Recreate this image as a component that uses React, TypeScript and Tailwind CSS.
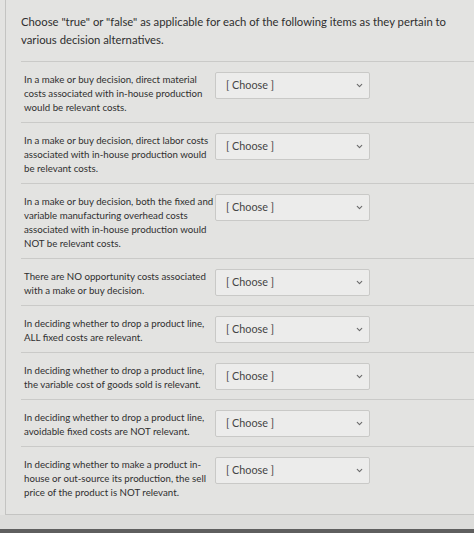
import { ChevronDown } from "lucide-react";

const items = [
  "In a make or buy decision, direct material costs associated with in-house production would be relevant costs.",
  "In a make or buy decision, direct labor costs associated with in-house production would be relevant costs.",
  "In a make or buy decision, both the fixed and variable manufacturing overhead costs associated with in-house production would NOT be relevant costs.",
  "There are NO opportunity costs associated with a make or buy decision.",
  "In deciding whether to drop a product line, ALL fixed costs are relevant.",
  "In deciding whether to drop a product line, the variable cost of goods sold is relevant.",
  "In deciding whether to drop a product line, avoidable fixed costs are NOT relevant.",
  "In deciding whether to make a product in-house or out-source its production, the sell price of the product is NOT relevant.",
];

function ChooseSelect() {
  return (
    <div className="flex h-[27px] w-[155px] shrink-0 items-center justify-between rounded-[2px] border border-[#c9c9c7] bg-[#ececeb] pl-[10px] pr-[5px]">
      <span className="text-[10.8px] text-[#444444]">[ Choose ]</span>
      <ChevronDown className="size-[9px] text-[#6b6b6b]" strokeWidth={3} />
    </div>
  );
}

export default function App() {
  return (
    <div className="h-[533px] w-[474px] overflow-hidden bg-[#e3e3e1] font-['Lato',sans-serif] text-[#2f2f2f]">
      <div className="ml-[5px] border-b border-l border-[#c4c4c2] pb-[7px]">
        <p className="pl-[15px] pr-3 pt-[13px] text-[11.3px] leading-[18px]">
          Choose "true" or "false" as applicable for each of the following items
          as they pertain to various decision alternatives.
        </p>

        <div className="ml-[15px] mt-[12px] border-t border-[#cacac8]">
          {items.map((text, i) => (
            <div
              key={i}
              className={`flex items-start gap-[1px] pb-[8px] pl-[3px] pt-[10px] ${
                i < items.length - 1 ? "border-b border-[#cacac8]" : ""
              }`}
            >
              <p className="w-[190px] shrink-0 text-[9.7px] leading-[14px]">{text}</p>
              <ChooseSelect />
            </div>
          ))}
        </div>
      </div>
      <div className="h-[14px] bg-[#dcdcda]" />
      <div className="h-[8px] bg-[#5f5f5f]" />
    </div>
  );
}
